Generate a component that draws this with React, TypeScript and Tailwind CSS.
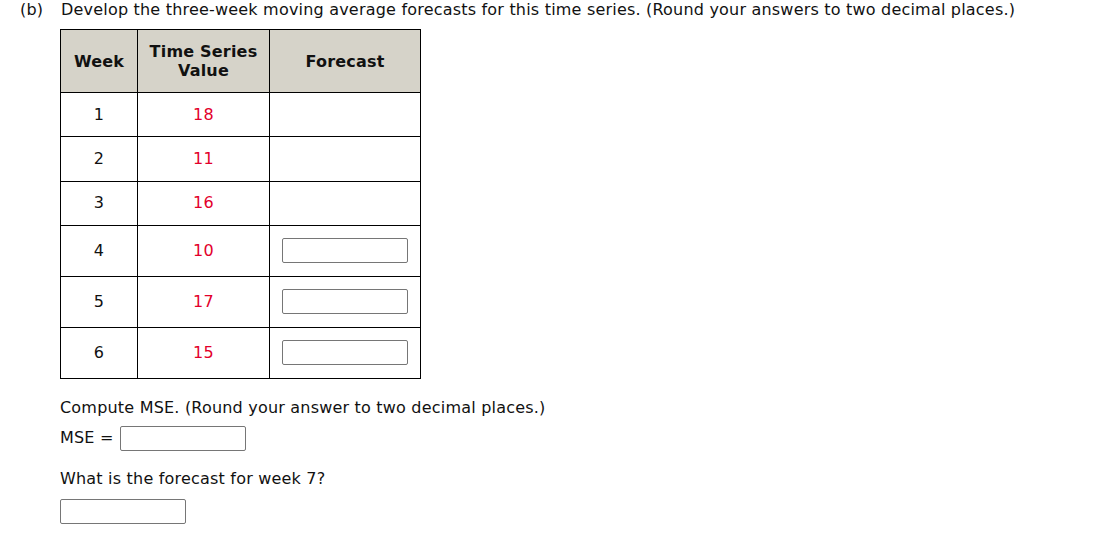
const rows = [
  { week: 1, value: 18, input: false },
  { week: 2, value: 11, input: false },
  { week: 3, value: 16, input: false },
  { week: 4, value: 10, input: true },
  { week: 5, value: 17, input: true },
  { week: 6, value: 15, input: true },
];

const Box = ({ className = "" }: { className?: string }) => (
  <input
    type="text"
    className={`h-[25px] w-[126px] rounded-[2px] border border-[#767676] bg-white ${className}`}
  />
);

export default function App() {
  return (
    <div className="min-h-screen bg-white font-['DejaVu_Sans',Verdana,sans-serif] text-[16px] leading-[20px] tracking-[0.2px] text-[#111]">
      <div className="flex pl-[20px]">
        <span className="w-[41px]">(b)</span>
        <span>
          Develop the three-week moving average forecasts for this time series. (Round your answers to two decimal places.)
        </span>
      </div>

      <div className="pl-[60px] pt-[9px]">
        <table className="border-collapse border border-black text-center">
          <thead>
            <tr className="h-[63px] bg-[#d6d3c9] font-bold leading-[19px]">
              <th className="w-[77px] border border-black">Week</th>
              <th className="w-[132px] border border-black">
                Time Series
                <br />
                Value
              </th>
              <th className="w-[151px] border border-black">Forecast</th>
            </tr>
          </thead>
          <tbody>
            {rows.map((r) => (
              <tr key={r.week} className={r.input ? "h-[51px]" : "h-[44.33px]"}>
                <td className="border border-black">{r.week}</td>
                <td className="border border-black text-[#e3002b]">{r.value}</td>
                <td className="border border-black">
                  {r.input && <Box className="align-middle" />}
                </td>
              </tr>
            ))}
          </tbody>
        </table>

        <p className="mt-[19px]">Compute MSE. (Round your answer to two decimal places.)</p>
        <div className="mt-[8px] flex items-center gap-[6px]">
          <span>MSE =</span>
          <Box />
        </div>
        <p className="mt-[18px]">What is the forecast for week 7?</p>
        <Box className="mt-[10px]" />
      </div>
    </div>
  );
}
